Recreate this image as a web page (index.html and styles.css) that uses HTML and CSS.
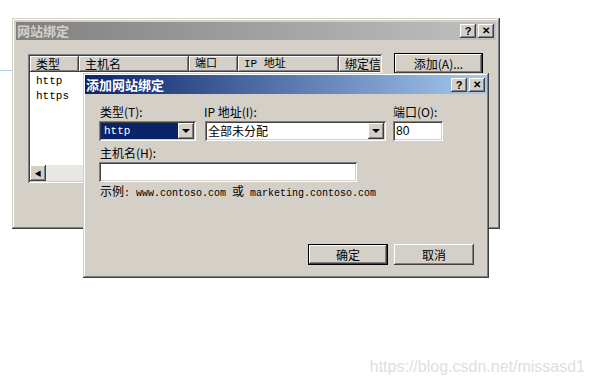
FILE: index.html
```html
<!DOCTYPE html>
<html lang="zh-CN">
<head>
    <meta charset="UTF-8">
    <title>网站绑定</title>
    <link rel="stylesheet" href="styles.css">
</head>
<body>
    <div class="desktop">
        <div class="stray-line"></div>

        <!-- outer dialog: site bindings -->
        <div class="window outer">
            <div class="titlebar inactive">
                <span class="title">网站绑定</span>
                <div class="title-buttons">
                    <span class="tbtn">?</span>
                    <span class="tbtn close">✕</span>
                </div>
            </div>
            <div class="outer-body">
                <div class="listview">
                    <div class="list-head">
                        <span class="col c1">类型</span>
                        <span class="col c2">主机名</span>
                        <span class="col c3">端口</span>
                        <span class="col c4">IP 地址</span>
                        <span class="col c5">绑定信</span>
                    </div>
                    <div class="list-rows">
                        <div class="list-row">http</div>
                        <div class="list-row">https</div>
                    </div>
                    <div class="hscroll">
                        <span class="sbtn">◀</span>
                    </div>
                </div>
                <button class="btn default add-btn">添加(A)...</button>
            </div>
        </div>

        <!-- inner dialog: add site binding -->
        <div class="window inner">
            <div class="titlebar active">
                <span class="title">添加网站绑定</span>
                <div class="title-buttons">
                    <span class="tbtn">?</span>
                    <span class="tbtn close">✕</span>
                </div>
            </div>
            <div class="form">
                <div class="field-row">
                    <div class="field f-type">
                        <label>类型(T):</label>
                        <div class="combo">
                            <span class="combo-value selected">http</span>
                            <span class="combo-arrow"></span>
                        </div>
                    </div>
                    <div class="field f-ip">
                        <label class="shift">IP 地址(I):</label>
                        <div class="combo">
                            <span class="combo-value">全部未分配</span>
                            <span class="combo-arrow"></span>
                        </div>
                    </div>
                    <div class="field f-port">
                        <label class="flush">端口(O):</label>
                        <div class="textbox">80</div>
                    </div>
                </div>
                <div class="field f-host">
                    <label>主机名(H):</label>
                    <div class="textbox"></div>
                </div>
                <div class="example"><span class="cjk">示例</span>: www.contoso.com <span class="cjk">或</span> marketing.contoso.com</div>
                <div class="actions">
                    <button class="btn default">确定</button>
                    <button class="btn">取消</button>
                </div>
            </div>
        </div>

        <div class="watermark">https://blog.csdn.net/missasd1</div>
    </div>
</body>
</html>
```

FILE: styles.css
```css
body {
    margin: 0;
    background: #fff;
    font-family: "Noto Sans CJK SC", "Liberation Sans", sans-serif;
    font-size: 12px;
    color: #000;
}

.desktop {
    position: relative;
    width: 596px;
    height: 384px;
    overflow: hidden;
}

.stray-line {
    position: absolute;
    left: 0;
    top: 70px;
    width: 12px;
    height: 1px;
    background: #a9d2f2;
}

/* windows */
.window {
    position: absolute;
    box-sizing: border-box;
    background: #d4d0c8;
    box-shadow: inset -1px -1px #404040, inset 1px 1px #d4d0c8,
                inset -2px -2px #808080, inset 2px 2px #fff;
}

.outer {
    left: 12px;
    top: 18px;
    width: 488px;
    height: 211px;
    padding: 4px;
}

.inner {
    left: 83px;
    top: 73px;
    width: 406px;
    height: 205px;
    padding: 2px;
}

.titlebar {
    display: flex;
    align-items: center;
    justify-content: space-between;
    height: 18px;
    padding: 0 2px 0 1px;
}

.titlebar.inactive {
    background: linear-gradient(to right, #808080, #c0c0c0);
    color: #d4d0c8;
}

.titlebar.active {
    height: 19px;
    background: linear-gradient(to right, #0a246a, #a6caf0);
    color: #fff;
}

.title {
    font-weight: bold;
    font-size: 13px;
    line-height: 18px;
}

.title-buttons {
    display: flex;
    gap: 2px;
}

.tbtn {
    width: 16px;
    height: 14px;
    box-sizing: border-box;
    background: #d4d0c8;
    box-shadow: inset -1px -1px #404040, inset 1px 1px #fff,
                inset -2px -2px #808080, inset 2px 2px #d4d0c8;
    font-family: "Liberation Sans", sans-serif;
    font-weight: bold;
    font-size: 11px;
    line-height: 14px;
    text-align: center;
    color: #000;
}

.tbtn.close {
    font-size: 10px;
}

/* outer body */
.outer-body {
    display: flex;
    align-items: flex-start;
    padding: 13px 0 0 12px;
}

.listview {
    position: relative;
    width: 354px;
    height: 129px;
    box-sizing: border-box;
    background: #fff;
    padding: 2px;
    box-shadow: inset 1px 1px #808080, inset -1px -1px #fff,
                inset 2px 2px #404040, inset -2px -2px #d4d0c8;
    margin-right: 12px;
    margin-top: 1px;
}

.list-head {
    display: flex;
    height: 16px;
    white-space: nowrap;
    overflow: hidden;
}

.col {
    flex: none;
    box-sizing: border-box;
    background: #d4d0c8;
    padding-left: 6px;
    line-height: 16px;
    box-shadow: inset -1px -1px #404040, inset 1px 1px #fff,
                inset -2px -2px #808080;
}

.c1 { width: 49px; }
.c2 { width: 110px; }
.c3 { width: 49px; }
.c4 { width: 101px; }
.c5 { width: 44px; }

.c3, .c4 {
    font-family: "Liberation Mono", "Noto Sans CJK SC", monospace;
    font-size: 11px;
}

.list-rows {
    padding: 2px 0 0 6px;
    font-family: "Liberation Mono", monospace;
    font-size: 11px;
}

.list-row {
    height: 15px;
    line-height: 15px;
}

.hscroll {
    position: absolute;
    left: 2px;
    right: 2px;
    bottom: 2px;
    height: 16px;
    background: #e9e7e3;
    display: flex;
}

.sbtn {
    width: 16px;
    height: 16px;
    box-sizing: border-box;
    background: #d4d0c8;
    box-shadow: inset -1px -1px #404040, inset 1px 1px #fff,
                inset -2px -2px #808080;
    font-size: 7px;
    line-height: 16px;
    text-align: center;
}

/* buttons */
.btn {
    width: 80px;
    height: 21px;
    padding: 0;
    border: 0;
    background: #d4d0c8;
    font-family: "Noto Sans CJK SC", sans-serif;
    font-size: 12px;
    color: #000;
    box-shadow: inset -1px -1px #404040, inset 1px 1px #fff,
                inset -2px -2px #808080, inset 2px 2px #d4d0c8;
}

.btn.default {
    box-shadow: inset 0 0 0 1px #000, inset -2px -2px #404040, inset 2px 2px #fff,
                inset -3px -3px #808080;
}

.add-btn {
    width: 89px;
    height: 21px;
}

/* inner form */
.form {
    padding: 10px 0 0 14px;
}

.field label {
    display: block;
    height: 17px;
    line-height: 15px;
    padding-left: 1px;
}

.field label.shift {
    margin-left: -2px;
}

.field label.flush {
    padding-left: 0;
}

.field-row {
    display: flex;
}

.f-type { width: 97px; margin-right: 9px; }
.f-ip { width: 181px; margin-right: 7px; }
.f-port { width: 50px; }
.f-host { width: 258px; margin-top: 4px; }

.combo, .textbox {
    height: 20px;
    box-sizing: border-box;
    background: #fff;
    box-shadow: inset 1px 1px #808080, inset -1px -1px #fff,
                inset 2px 2px #404040, inset -2px -2px #d4d0c8;
}

.combo {
    display: flex;
    padding: 2px;
}

.combo-value {
    flex: 1;
    line-height: 16px;
    padding-left: 1px;
    white-space: nowrap;
}

.combo-value.selected {
    background: #0a246a;
    color: #fff;
    font-family: "Liberation Mono", monospace;
    font-size: 11px;
    padding-left: 3px;
}

.combo-arrow {
    position: relative;
    width: 16px;
    height: 16px;
    background: #d4d0c8;
    box-shadow: inset -1px -1px #404040, inset 1px 1px #fff,
                inset -2px -2px #808080;
}

.combo-arrow::after {
    content: "";
    position: absolute;
    left: 4px;
    top: 6px;
    border-left: 4px solid transparent;
    border-right: 4px solid transparent;
    border-top: 4px solid #000;
}

.textbox {
    padding: 2px 3px;
    line-height: 16px;
    font-family: "Liberation Sans", sans-serif;
}

.example {
    margin-top: 2px;
    height: 14px;
    line-height: 14px;
    padding-left: 1px;
    font-family: "Liberation Mono", "Noto Sans CJK SC", monospace;
    font-size: 10px;
    white-space: nowrap;
}

.example .cjk {
    font-family: "Noto Sans CJK SC", sans-serif;
    font-size: 12px;
}

.actions {
    display: flex;
    justify-content: flex-end;
    gap: 6px;
    margin-top: 46px;
    padding-right: 13px;
}

.watermark {
    position: absolute;
    right: 11px;
    top: 358px;
    font-family: "Liberation Sans", sans-serif;
    font-size: 16px;
    color: #dedede;
}
```
